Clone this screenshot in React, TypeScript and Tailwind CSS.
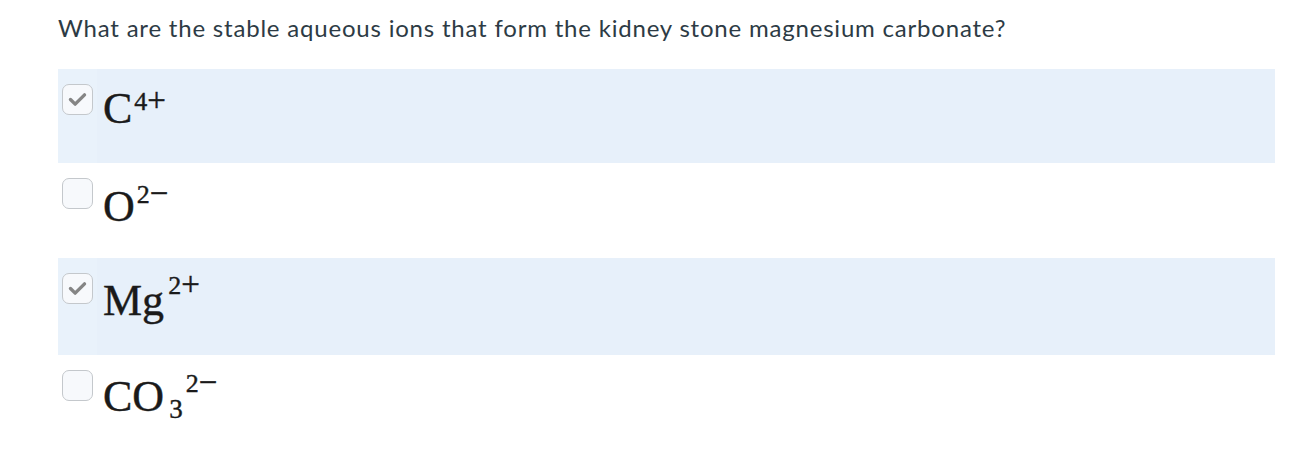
import React from "react";

const Check = () => (
  <svg width="31" height="31" viewBox="0 0 31 31" className="block">
    <polyline
      points="8,15.5 13,20.5 23,10.5"
      fill="none"
      stroke="#858585"
      strokeWidth="3.6"
      strokeLinecap="round"
      strokeLinejoin="round"
    />
  </svg>
);

function Box({ checked }: { checked: boolean }) {
  return (
    <div className="w-[31px] h-[31px] rounded-[7px] border border-[#c4c8cc] bg-[#f7f9fc] box-border flex items-center justify-center overflow-hidden">
      {checked ? <Check /> : null}
    </div>
  );
}

function Row({
  checked,
  h,
  pt,
  children,
}: {
  checked: boolean;
  h: string;
  pt: string;
  children: React.ReactNode;
}) {
  return (
    <div className={`flex ${h} ${checked ? "bg-[#e7f0fa]" : "bg-white"}`}>
      <div className={`w-[39px] shrink-0 pl-[4px] pt-[15px] ${checked ? "bg-[#e9f2fb]" : "bg-white"}`}>
        <Box checked={checked} />
      </div>
      <div
        className={`flex-1 pl-[6px] ${pt} text-[44px] leading-[44px] text-[#1a1a1a] whitespace-nowrap [-webkit-text-stroke:0.4px_#1a1a1a]`}
        style={{ fontFamily: '"Liberation Serif", "Times New Roman", serif' }}
      >
        {children}
      </div>
    </div>
  );
}

function Sup({ raise, ml, d, s }: { raise: string; ml: string; d: string; s: string }) {
  return (
    <span className={`relative ${raise} ${ml} text-[26px] leading-none`}>
      {d}
      <span className="text-[33px] leading-none relative top-[1px]">{s}</span>
    </span>
  );
}

export default function App() {
  return (
    <div className="w-[1303px] h-[460px] bg-white pl-[58px] pr-[28px] pt-[11px] box-border">
      <div
        className="text-[24px] leading-[33px] tracking-[0.8px] text-[#2d3b45] h-[33px] whitespace-nowrap"
        style={{ fontFamily: "Lato, sans-serif" }}
      >
        What are the stable aqueous ions that form the kidney stone magnesium carbonate?
      </div>
      <div className="mt-[25px]">
        <Row checked h="h-[94px]" pt="pt-[18px]">
          <span>C</span>
          <Sup raise="-top-[13px]" ml="ml-[2px]" d="4" s="+" />
        </Row>
        <Row checked={false} h="h-[95px]" pt="pt-[22px]">
          <span>O</span>
          <Sup raise="-top-[18px]" ml="ml-[2px]" d="2" s="−" />
        </Row>
        <Row checked h="h-[97px]" pt="pt-[21px]">
          <span>Mg</span>
          <Sup raise="-top-[21px]" ml="ml-[4px]" d="2" s="+" />
        </Row>
        <Row checked={false} h="h-[95px]" pt="pt-[20px]">
          <span>CO</span>
          <span className="relative top-[7px] text-[27px] leading-none ml-[5px]">3</span>
          <Sup raise="-top-[19px]" ml="ml-[3px]" d="2" s="−" />
        </Row>
      </div>
    </div>
  );
}
